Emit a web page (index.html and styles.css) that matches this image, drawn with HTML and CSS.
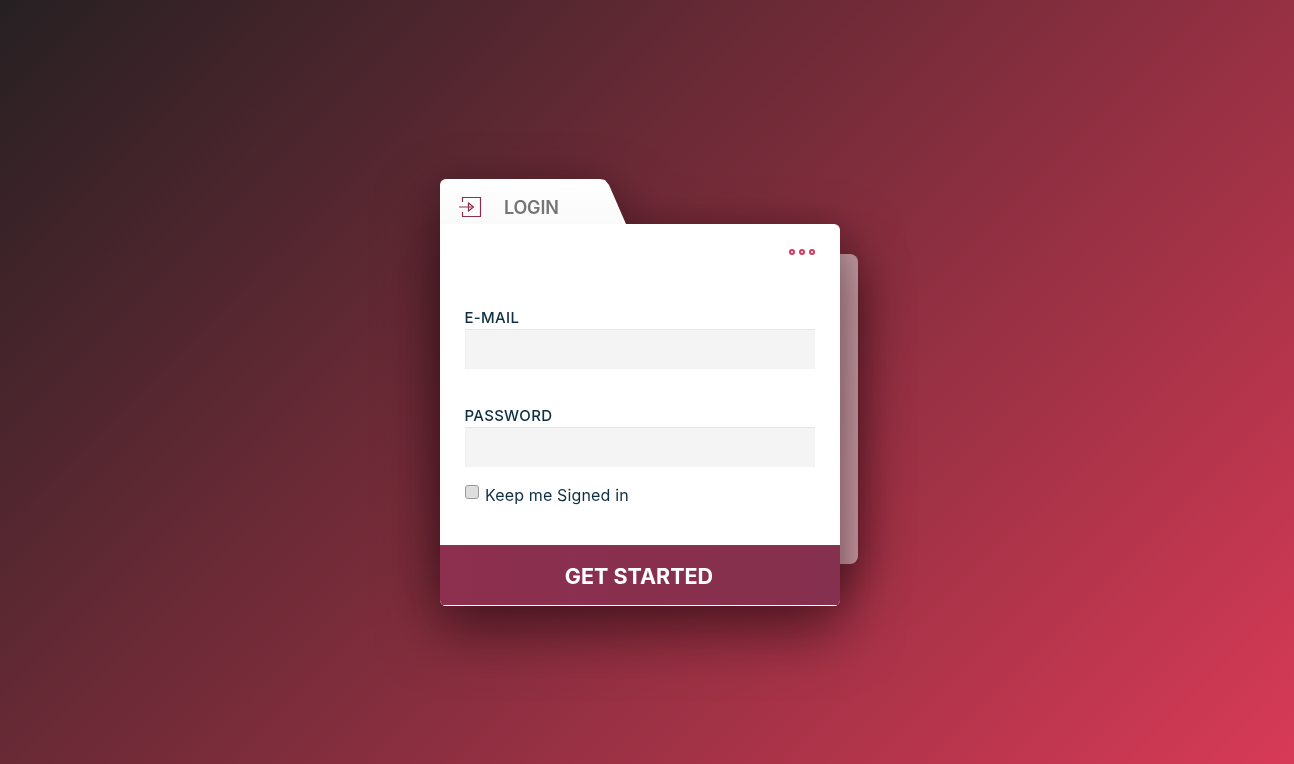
FILE: index.html
```html
<!DOCTYPE html>
<html lang="en">
<head>
<meta charset="utf-8">
<title>Login</title>
<link rel="stylesheet" href="styles.css">
</head>
<body>
<main class="widget">
  <div class="back-card"></div>
  <div class="shape">
    <div class="tab">
      <svg class="tab-icon" width="24" height="22" viewBox="0 0 24 22" fill="none" stroke="#8c2f4e" stroke-width="1.2">
        <path d="M4.5 6V1.5H22.5V20.5H4.5V16"/>
        <path d="M1 11H15"/>
        <path d="M10.5 7V15L15.5 11Z"/>
      </svg>
      <span class="tab-label">LOGIN</span>
    </div>
    <form class="card">
      <div class="dots"><i></i><i></i><i></i></div>
      <div class="fields">
        <label class="field">
          <span class="field-label">E-MAIL</span>
          <input class="input" type="text">
        </label>
        <label class="field">
          <span class="field-label">PASSWORD</span>
          <input class="input" type="password">
        </label>
        <label class="remember">
          <input class="check" type="checkbox">
          <span>Keep me Signed in</span>
        </label>
      </div>
      <button class="submit" type="button">GET STARTED</button>
    </form>
  </div>
</main>
</body>
</html>
```

FILE: styles.css
```css
* { box-sizing: border-box; }
html, body { height: 100%; margin: 0; }
body {
  overflow: hidden;
  padding: 179px 0 0 440px;
  background: linear-gradient(135deg, #262022 0%, #d83a56 100%);
  font-family: "Inter", "Open Sans", sans-serif;
  color: #0f2f42;
}
.widget { position: relative; width: 400px; height: 427px; }
.back-card {
  position: absolute;
  top: 75px;
  left: 18px;
  width: 400px;
  height: 310px;
  border-radius: 8px;
  background: rgba(255, 255, 255, 0.55);
  box-shadow: 0 14px 50px rgba(20, 0, 8, 0.5);
}
.shape {
  position: relative;
  display: flex;
  flex-direction: column;
  filter: drop-shadow(0 24px 30px rgba(30, 5, 12, 0.55)) drop-shadow(0 0 14px rgba(30, 5, 12, 0.15));
}
.tab {
  display: flex;
  align-items: center;
  width: 186px;
  height: 45px;
  padding: 12px 0 0 18px;
  background: linear-gradient(#fff, #fafafa);
  border-radius: 6px 10px 0 0;
  clip-path: polygon(0 0, 160px 0, 165px 1px, 169px 6px, 186px 45px, 0 45px);
}
.tab-icon { flex: none; margin-top: -1px; }
.tab-label {
  margin-left: 22px;
  font-size: 18px;
  font-weight: 600;
  letter-spacing: -0.2px;
  color: #757575;
}
.card {
  display: flex;
  flex-direction: column;
  width: 400px;
  height: 382px;
  border-radius: 0 6px 6px 6px;
  background: #fff;
  overflow: hidden;
}
.dots {
  display: flex;
  justify-content: flex-end;
  gap: 4px;
  height: 25px;
  padding: 25px 25px 0 0;
}
.dots i {
  width: 6px;
  height: 6px;
  border: 2px solid #d8385a;
  border-radius: 50%;
}
.fields {
  display: flex;
  flex-direction: column;
  flex: 1;
  padding: 59px 25px 0 24.5px;
}
.field { display: flex; flex-direction: column; margin-bottom: 37px; }
.field + .field { margin-bottom: 0; }
.field-label {
  height: 21px;
  font-size: 15px;
  font-weight: 500;
  line-height: 20px;
  letter-spacing: 0.3px;
}
.input {
  width: 350px;
  height: 40px;
  margin: 0 0 0 0.5px;
  padding: 0;
  border: 0;
  border-top: 1px solid #e6e6e6;
  border-left: 1px solid #efefef;
  background: #f4f4f4;
}
.remember {
  display: flex;
  align-items: flex-start;
  margin-top: 17px;
  font-size: 16px;
  line-height: 22px;
  letter-spacing: 0.15px;
}
.check {
  flex: none;
  width: 14px;
  height: 14px;
  margin: 1px 6px 0 0.5px;
  appearance: none;
  border: 1px solid #999;
  border-radius: 3px;
  background: #dedede;
}
.submit {
  height: 61px;
  padding: 0 2px 0 0;
  border: 0;
  border-top: 1px solid #7d3a52;
  border-bottom: 1px solid #fff;
  background: linear-gradient(90deg, #8d2f4f, #85304e);
  color: #fff;
  font-family: inherit;
  font-size: 21.5px;
  font-weight: 700;
}
```
